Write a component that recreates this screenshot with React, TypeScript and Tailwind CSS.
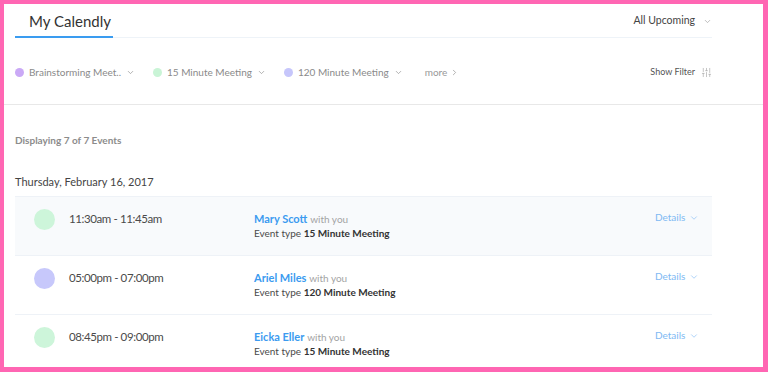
import { ChevronDown, ChevronRight, SlidersVertical } from "lucide-react";

type Ev = {
  time: string;
  name: string;
  type: string;
  color: string;
  active?: boolean;
};

const events: Ev[] = [
  { time: "11:30am - 11:45am", name: "Mary Scott", type: "15 Minute Meeting", color: "bg-[#cdf5da]", active: true },
  { time: "05:00pm - 07:00pm", name: "Ariel Miles", type: "120 Minute Meeting", color: "bg-[#c7c8fb]" },
  { time: "08:45pm - 09:00pm", name: "Eicka Eller", type: "15 Minute Meeting", color: "bg-[#cdf5da]" },
];

const filters = [
  { label: "Brainstorming Meet..", color: "bg-[#caa9f6]" },
  { label: "15 Minute Meeting", color: "bg-[#c9f4d6]" },
  { label: "120 Minute Meeting", color: "bg-[#c6c6fb]" },
];

const EventRow = ({ ev }: { ev: Ev }) => (
  <div
    className={`flex items-start h-[59px] border-t border-[#eef2f7] pt-[12px] ${
      ev.active ? "bg-[#f8fafc]" : "bg-white"
    }`}
  >
    <div className={`ml-[19px] w-[21px] h-[21px] rounded-full ${ev.color}`} />
    <div className="ml-[14px] w-[185px] text-[11.5px] tracking-[-0.4px] leading-[20px] text-[#4a4a4a]">
      {ev.time}
    </div>
    <div className="flex-1">
      <div className="pt-[2px] text-[11px] leading-[15px]">
        <span className="font-bold text-[#3b9bf0]">{ev.name}</span>{" "}
        <span className="text-[#a3a3a3] text-[10px]">with you</span>
      </div>
      <div className="text-[10px] leading-[13px] text-[#4a4a4a]">
        Event type <span className="font-bold text-[#333]">{ev.type}</span>
      </div>
    </div>
    <div className="w-[57px] flex items-center gap-[4px] text-[10px] leading-[15px] text-[#7eb9f3] pt-[1px]">
      Details <ChevronDown size={10} strokeWidth={1.5} />
    </div>
  </div>
);

export default function App() {
  return (
    <div
      className="w-[768px] h-[372px] bg-[#ff66b3] pt-[4px] pl-[4px] pr-[5px] pb-[5px]"
      style={{ fontFamily: "Lato, 'Open Sans', sans-serif" }}
    >
      <div className="w-full h-full bg-white overflow-hidden">
        <div className="pl-[11px] w-[708px]">
          <div className="flex items-end justify-between border-b border-[#eef3f8] h-[34px]">
            <div className="w-[98px] border-b-2 border-[#3a9cf0] -mb-px text-[15px] leading-[20px] text-[#333] pl-[14px] pb-[5px]">
              My Calendly
            </div>
            <div className="flex items-center gap-[8px] pb-[8px] text-[10.5px] text-[#444]">
              All Upcoming <ChevronDown size={9} className="text-[#aaa]" />
            </div>
          </div>
          <div className="flex items-center h-[66px] pt-[2px] text-[10px] text-[#8a8a8a]">
            {filters.map((f) => (
              <div key={f.label} className="flex items-center mr-[18px]">
                <div className={`w-[9px] h-[9px] rounded-full ${f.color}`} />
                <span className="ml-[5px]">{f.label}</span>
                <ChevronDown size={9} className="ml-[5px] text-[#999]" />
              </div>
            ))}
            <div className="flex items-center ml-[4px] text-[#999]">
              more <ChevronRight size={9} className="ml-[3px]" />
            </div>
            <div className="ml-auto flex items-center gap-[6px] text-[9px] text-[#555]">
              Show Filter
              <SlidersVertical size={11} className="text-[#aaa]" strokeWidth={1.5} />
            </div>
          </div>
        </div>
        <div className="border-t border-[#e8e8e8]" />
        <div className="pl-[11px] w-[708px]">
          <div className="pt-[28px] text-[10px] font-bold text-[#8c8c8c] leading-[14px]">
            Displaying 7 of 7 Events
          </div>
          <div className="pt-[28px] pb-[7px] text-[11px] text-[#444] leading-[14px]">
            Thursday, February 16, 2017
          </div>
          {events.map((ev) => (
            <EventRow key={ev.name} ev={ev} />
          ))}
        </div>
      </div>
    </div>
  );
}
